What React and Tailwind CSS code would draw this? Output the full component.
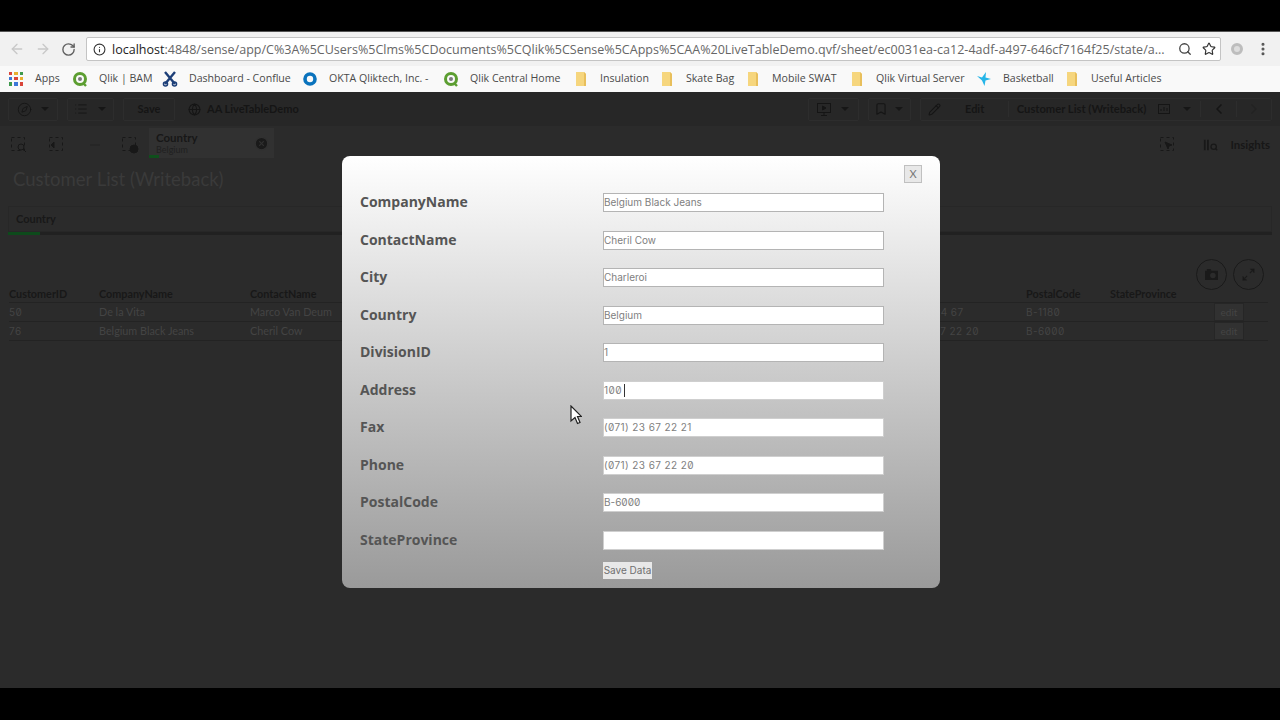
import {
  ArrowLeft, ArrowRight, Bookmark, ChevronLeft, ChevronRight, Compass, EllipsisVertical,
  Globe, Info, List, Pencil, RotateCw, Search, Star, XCircle,
} from 'lucide-react';

const bookmarks = [
  { label: 'Apps', icon: 'apps', width: 'w-[26px]' },
  { label: 'Qlik | BAM', icon: 'qlik', width: 'w-[52px]' },
  { label: 'Dashboard - Conflue', icon: 'tools', width: 'w-[102px]' },
  { label: 'OKTA Qliktech, Inc. -', icon: 'okta', width: 'w-[103px]' },
  { label: 'Qlik Central Home', icon: 'qlik', width: 'w-[92px]' },
  { label: 'Insulation', icon: 'folder', width: 'w-[48px]' },
  { label: 'Skate Bag', icon: 'folder', width: 'w-[48px]' },
  { label: 'Mobile SWAT', icon: 'folder', width: 'w-[66px]' },
  { label: 'Qlik Virtual Server', icon: 'folder', width: 'w-[89px]' },
  { label: 'Basketball', icon: 'star', width: 'w-[50px]' },
  { label: 'Useful Articles', icon: 'folder', width: 'w-[72px]' },
];

const fields = [
  ['CompanyName', 'Belgium Black Jeans'],
  ['ContactName', 'Cheril Cow'],
  ['City', 'Charleroi'],
  ['Country', 'Belgium'],
  ['DivisionID', '1'],
  ['Address', '100', true],
  ['Fax', '(071) 23 67 22 21'],
  ['Phone', '(071) 23 67 22 20'],
  ['PostalCode', 'B-6000'],
  ['StateProvince', ''],
];

const rows = [
  ['50', 'De la Vita', 'Marco Van Deum', '(02) 201 24 67', 'B-1180'],
  ['76', 'Belgium Black Jeans', 'Cheril Cow', '(071) 23 67 22 20', 'B-6000'],
];

function BookmarkIcon({ type }) {
  if (type === 'apps') {
    const colors = ['#d9453a', '#e8b030', '#3f9a4d', '#3c78d8', '#d9453a', '#e8b030', '#3f9a4d', '#3c78d8', '#d9453a'];
    return (
      <span className="grid h-4 w-4 shrink-0 grid-cols-3 gap-[2px] p-[1px]">
        {colors.map((c, i) => <span key={i} style={{ backgroundColor: c }} />)}
      </span>
    );
  }
  if (type === 'qlik') {
    return (
      <svg viewBox="0 0 16 16" className="h-4 w-4 shrink-0">
        <circle cx="8" cy="8" r="5.5" fill="none" stroke="#5c9e31" strokeWidth="3" />
        <circle cx="8" cy="8" r="2" fill="#7a7a7a" />
        <path d="M11 12l3 3" stroke="#5c9e31" strokeWidth="2.4" />
      </svg>
    );
  }
  if (type === 'tools') {
    return (
      <svg viewBox="0 0 16 16" className="h-4 w-4 shrink-0">
        <path d="M3 1l10 12M13 1L3 13" stroke="#1d3f78" strokeWidth="2.4" />
        <circle cx="3.5" cy="13" r="2" fill="none" stroke="#1d3f78" strokeWidth="1.6" />
        <circle cx="12.5" cy="13" r="2" fill="none" stroke="#1d3f78" strokeWidth="1.6" />
      </svg>
    );
  }
  if (type === 'okta') {
    return (
      <svg viewBox="0 0 16 16" className="h-4 w-4 shrink-0">
        <circle cx="8" cy="8" r="5" fill="none" stroke="#0a73bd" strokeWidth="3.6" />
      </svg>
    );
  }
  if (type === 'star') {
    return (
      <svg viewBox="0 0 16 16" className="h-4 w-4 shrink-0">
        <path d="M1 5l5 1.5L10 1 9.5 6.5 15 8l-5.5 1.5L8.500 15 6 9.500z" fill="#25b5e8" />
      </svg>
    );
  }
  return (
    <svg viewBox="0 0 16 16" className="h-4 w-4 shrink-0">
      <path d="M3 1h8l2 2v12H3z" fill="#f6d67e" />
      <path d="M11 1l2 2v12h-2z" fill="#e8bf5c" />
    </svg>
  );
}

function Caret() {
  return <span className="block h-0 w-0 border-x-[4px] border-t-[4px] border-x-transparent border-t-[#161616]" />;
}

function DashedIcon({ children, className = '' }) {
  return (
    <svg viewBox="0 0 18 18" className={`h-[18px] w-[18px] shrink-0 ${className}`} fill="none" stroke="#181818">
      <rect x="1.500" y="1.500" width="13" height="13" strokeDasharray="3 3" />
      {children}
    </svg>
  );
}

function BarButton({ className, children }) {
  return (
    <div className={`flex h-[23px] items-center rounded-[2px] border border-[#2d2d2d] ${className}`}>
      {children}
    </div>
  );
}

function ChromeBars() {
  return (
    <>
      <div className="flex h-[34px] items-center bg-[#f1f1f1] pl-[9px] pr-[8px]">
        <ArrowLeft className="h-4 w-4 text-[#c8c8c8]" strokeWidth={2} />
        <ArrowRight className="ml-[10px] h-4 w-4 text-[#c8c8c8]" strokeWidth={2} />
        <RotateCw className="ml-[10px] h-[15px] w-[15px] text-[#5f5f5f]" strokeWidth={2.2} />
        <div className="ml-[10px] flex h-[24px] w-[1135px] items-center rounded-[2px] border border-[#c4c4c4] bg-white pl-[6px] pr-[4px]">
          <Info className="h-[13px] w-[13px] text-[#333333]" />
          <span className="ml-[6px] mt-[2px] whitespace-nowrap font-['Open_Sans',sans-serif] text-[12.52px] text-[#666666]">
            <span className="text-[#222222]">localhost</span>:4848/sense/app/C%3A%5CUsers%5Clms%5CDocuments%5CQlik%5CSense%5CApps%5CAA%20LiveTableDemo.qvf/sheet/ec0031ea-ca12-4adf-a497-646cf7164f25/state/a...
          </span>
          <Search className="ml-auto h-[14px] w-[14px] text-[#444444]" strokeWidth={2.2} />
          <Star className="ml-[10px] h-[14px] w-[14px] text-[#333333]" strokeWidth={2} />
        </div>
        <span className="ml-[10px] h-[12px] w-[12px] rounded-full border-[3px] border-[#bdbdbd] bg-[#dddddd]" />
        <EllipsisVertical className="ml-[12px] h-4 w-4 text-[#555555]" strokeWidth={2.6} />
      </div>
      <div className="flex h-[26px] items-center gap-[11px] bg-[#f9f9f9] pb-px pl-[8px] font-['Open_Sans',sans-serif] text-[10.6px] text-[#4a4a4a]">
        {bookmarks.map((b) => (
          <div key={b.label} className="flex items-center gap-[11px]">
            <BookmarkIcon type={b.icon} />
            <span className={`${b.width} whitespace-nowrap`}>{b.label}</span>
          </div>
        ))}
      </div>
    </>
  );
}

function QlikToolbar() {
  return (
    <div className="flex h-[34px] items-center justify-between bg-[#272727] pl-[8px] pr-[8px] font-['Lato',sans-serif] text-[11px] font-bold text-[#151515]">
      <div className="flex items-center">
        <BarButton className="w-[50px] gap-[9px] pl-[8px]">
          <Compass className="h-[15px] w-[15px]" strokeWidth={1.5} /><Caret />
        </BarButton>
        <BarButton className="ml-[9px] w-[47px] gap-[10px] pl-[6px]">
          <List className="h-[14px] w-[14px]" strokeWidth={1.5} /><Caret />
        </BarButton>
        <BarButton className="ml-[9px] w-[52px] justify-center">Save</BarButton>
        <Globe className="ml-[13px] h-[13px] w-[13px]" strokeWidth={2} />
        <span className="ml-[6px]">AA LiveTableDemo</span>
      </div>
      <div className="flex items-center">
        <BarButton className="w-[51px] gap-[9px] pl-[7px]">
          <svg viewBox="0 0 16 16" className="h-4 w-4" fill="none" stroke="#151515">
            <rect x="1.500" y="2.500" width="13" height="9" />
            <path d="M8 11.500v3M5 14.500h6" />
            <path d="M6.500 5l3.500 2-3.500 2z" fill="#151515" />
          </svg>
          <Caret />
        </BarButton>
        <BarButton className="ml-[9px] w-[43px] gap-[7px] pl-[5px]">
          <Bookmark className="h-[14px] w-[14px]" strokeWidth={2} /><Caret />
        </BarButton>
        <BarButton className="ml-[9px] w-[352px]">
          <div className="flex w-[88px] items-center border-r border-[#2d2d2d] pl-[7px]">
            <Pencil className="h-[13px] w-[13px]" strokeWidth={2} />
            <span className="ml-[24px]">Edit</span>
          </div>
          <div className="flex w-[193px] items-center border-r border-[#2d2d2d] pl-[8px]">
            <span className="whitespace-nowrap text-[11.2px]">Customer List (Writeback)</span>
            <svg viewBox="0 0 14 14" className="ml-[11px] h-[14px] w-[14px]" fill="none" stroke="#151515">
              <rect x="1.500" y="2.500" width="11" height="9" />
              <path d="M4 9V7M7 9V5M10 9V6" />
            </svg>
            <span className="ml-[12px]"><Caret /></span>
          </div>
          <div className="flex w-[36px] justify-center border-r border-[#2d2d2d]">
            <ChevronLeft className="h-4 w-4" strokeWidth={2.5} />
          </div>
          <div className="flex w-[34px] justify-center">
            <ChevronRight className="h-4 w-4 text-[#222222]" strokeWidth={2.5} />
          </div>
        </BarButton>
      </div>
    </div>
  );
}

function SelectionBar() {
  return (
    <div className="flex h-[34px] items-center justify-between bg-[#2b2b2b] pl-[10px] pr-[10px] font-['Lato',sans-serif] text-[#171717]">
      <div className="flex items-center">
        <DashedIcon className="mt-[3px]"><circle cx="11" cy="11" r="3" fill="#2b2b2b" /><path d="M13 13l3 3" /></DashedIcon>
        <DashedIcon className="ml-[20px] mt-[3px]"><path d="M3 9l3-3v6z" fill="#181818" /></DashedIcon>
        <span className="ml-[24px] mt-[3px] h-[2px] w-[10px] bg-[#262626]" />
        <DashedIcon className="ml-[21px] mt-[3px]"><circle cx="13" cy="13" r="4" fill="#181818" /></DashedIcon>
        <div className="relative ml-[10px] flex h-[30px] w-[125px] items-center justify-between bg-[#313131] pl-[7px] pr-[5px]">
          <div className="flex flex-col">
            <span className="text-[11.5px] font-bold leading-[13px]">Country</span>
            <span className="text-[9px] leading-[12px] text-[#202020]">Belgium</span>
          </div>
          <XCircle className="h-[15px] w-[15px] fill-[#1a1a1a] text-[#313131]" />
          <span className="absolute bottom-0 left-0 h-[3px] w-[10px] bg-[#0f4f1c]" />
        </div>
      </div>
      <div className="mt-[4px] flex items-center">
        <DashedIcon><path d="M6 6l7 3-3 1-1 3z" fill="#181818" /></DashedIcon>
        <svg viewBox="0 0 18 16" className="ml-[26px] h-4 w-[16px]" fill="none" stroke="#181818" strokeWidth="1.500">
          <path d="M2 2v12M5.500 2v12" strokeWidth="2" />
          <circle cx="12" cy="10" r="3" />
          <path d="M14 12l2 2" />
        </svg>
        <span className="ml-[11px] text-[11.5px] font-bold">Insights</span>
      </div>
    </div>
  );
}

function SheetBehind() {
  const cols = 'grid grid-cols-[90px_151px_639px_137px_84px_104px_1fr] items-center border-b border-[#232323]';
  const mono = "font-['Inter',sans-serif] text-[10px] tracking-[0.4px]";
  return (
    <div className="flex-1 bg-[#2b2b2b] px-[8px] font-['Lato',sans-serif]">
      <h1 className="pl-[5px] pt-[7px] text-[18.500px] font-normal leading-[24px] text-[#3a3a3a]">Customer List (Writeback)</h1>
      <div className="mt-[15px] flex h-[26px] items-center border border-[#272727] pl-[7px] text-[11px] font-bold text-[#181818]">Country</div>
      <div className="flex h-[3px] bg-[#212121]">
        <span className="h-full w-[32px] bg-[#0d4a1b]" />
      </div>
      <div className="mr-[8px] mt-[24px] flex justify-end gap-[6px]">
        <span className="flex h-[31px] w-[31px] items-center justify-center rounded-full border-[1.500px] border-[#1a1a1a]">
          <svg viewBox="0 0 16 14" className="h-[13px] w-[15px]">
            <path fillRule="evenodd" fill="#1a1a1a" d="M1 3h2V1h4l1 2h7v10H1zM9.500 5a3 3 0 1 0 0 6 3 3 0 0 0 0-6z" />
          </svg>
        </span>
        <span className="flex h-[31px] w-[31px] items-center justify-center rounded-full border-[1.500px] border-[#1a1a1a]">
          <svg viewBox="0 0 16 16" className="h-[15px] w-[15px]" fill="#1a1a1a" stroke="#1a1a1a">
            <path d="M14 2v4l-4-4z" strokeWidth="0.500" />
            <path d="M2 14v-4l4 4z" strokeWidth="0.500" />
            <path d="M11.500 4.500L9.500 6.500M4.500 11.500l2-2" strokeWidth="1.200" />
          </svg>
        </span>
      </div>
      <div className="-mt-[4px] ml-px mr-[4px] text-[10.800px]">
        <div className={`${cols} h-[17px] font-bold text-[#181818]`}>
          <span>CustomerID</span><span>CompanyName</span><span>ContactName</span><span />
          <span>PostalCode</span><span>StateProvince</span><span />
        </div>
        {rows.map((r) => (
          <div key={r[0]} className={`${cols} h-[19px] pb-px text-[#444444] slashed-zero`}>
            <span className={mono}>{r[0]}</span>
            <span>{r[1]}</span>
            <span>{r[2]}</span>
            <span className={mono}>{r[3]}</span>
            <span className={mono}>{r[4]}</span>
            <span />
            <span className="flex h-[18px] w-[30px] items-center justify-center border border-[#262626] bg-[#313131] text-[10px]">edit</span>
          </div>
        ))}
      </div>
    </div>
  );
}

function EditModal() {
  return (
    <div className="absolute left-[342px] top-[156px] flex h-[432px] w-[598px] flex-col rounded-[8px] bg-gradient-to-b from-white to-[#9a9a9a] pl-[18px]">
      <div className="flex justify-end pr-[18px] pt-[9px]">
        <button className="flex h-[18px] w-[18px] items-center justify-center border border-[#c0c0c0] bg-[#e8e8e8] font-['Lato',sans-serif] text-[11px] text-[#777777]">X</button>
      </div>
      <div className="mt-[10px] flex flex-col gap-[18.500px]">
        {fields.map(([label, value, caret], i) => (
          <div key={label} className="flex h-[19px] items-center">
            <label className="-mt-[2px] w-[243px] font-['Open_Sans',sans-serif] text-[14px] font-bold text-[#555555]">{label}</label>
            <div className={`flex h-[19px] w-[281px] items-center border bg-white font-['Inter',sans-serif] text-[10px] text-[#808080] slashed-zero ${i < 5 ? 'border-[#b4b4b4]' : 'border-[#cfcfcf]'} ${i >= 5 && i < 8 ? 'tracking-[0.4px]' : ''}`}>
              {value}
              {caret && <span className="ml-[2px] h-[13px] w-px bg-[#333333]" />}
            </div>
          </div>
        ))}
      </div>
      <button className="ml-[243px] mt-[12px] h-[17px] w-[49px] bg-[#e8e8e8] font-['Inter',sans-serif] text-[10px] text-[#707070]">Save Data</button>
    </div>
  );
}

export default function App() {
  return (
    <div className="relative flex h-[720px] w-[1280px] flex-col overflow-hidden bg-black">
      <div className="h-[32px] shrink-0 border-b border-[#555555] bg-black" />
      <ChromeBars />
      <QlikToolbar />
      <SelectionBar />
      <SheetBehind />
      <div className="h-[32px] shrink-0 bg-black" />
      <EditModal />
      {/* mouse pointer */}
      <svg viewBox="0 0 12 20" className="absolute left-[570px] top-[405px] h-[20px] w-[12px]">
        <path d="M1 1v15l4-3.500 2.500 6 2.500-1-2.500-6H11.500z" fill="#ffffff" stroke="#222222" strokeWidth="1.200" />
      </svg>
    </div>
  );
}
